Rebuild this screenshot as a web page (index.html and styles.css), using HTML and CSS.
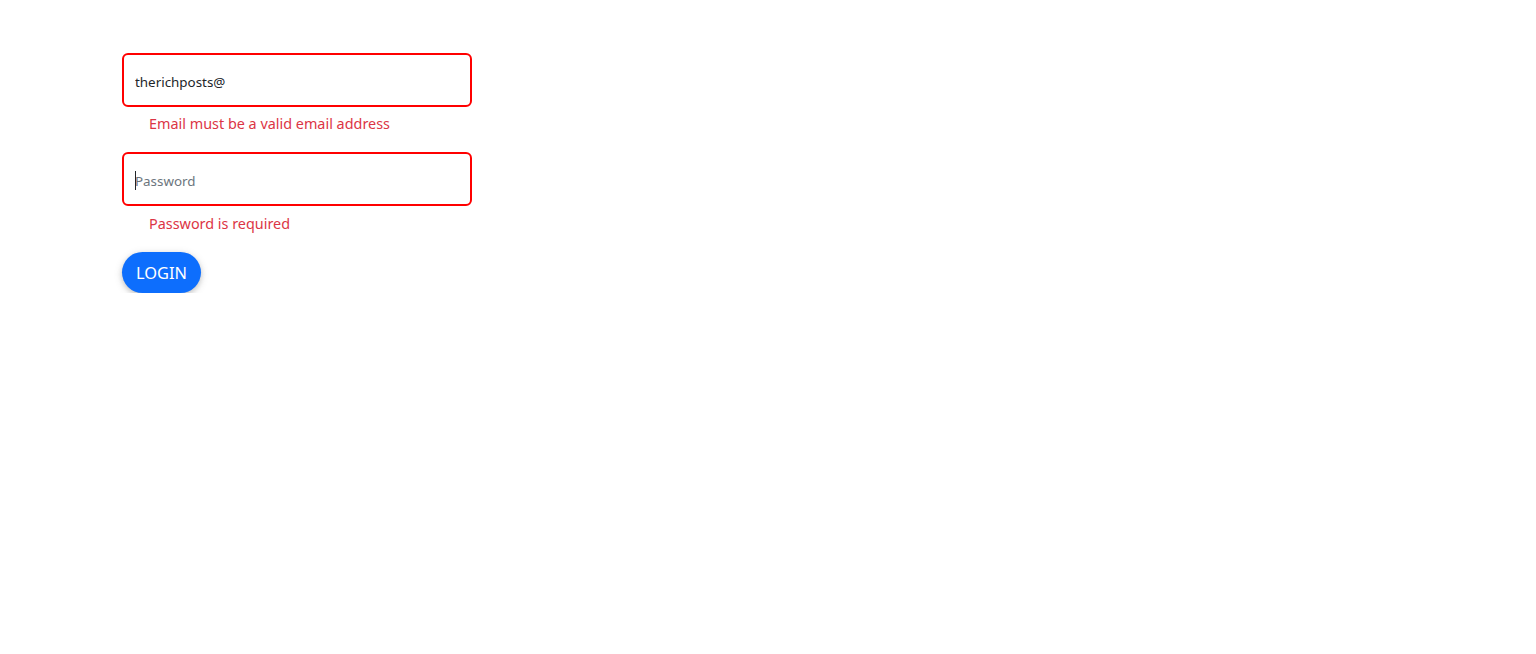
FILE: index.html
```html
<!DOCTYPE html>
<html lang="en">
<head>
<meta charset="utf-8">
<title>Login</title>
<link rel="stylesheet" href="styles.css">
</head>
<body>
  <form class="login-form" novalidate>
    <div class="field">
      <input class="field-input" type="email" value="therichposts@" aria-label="Email">
    </div>
    <div class="field-error">Email must be a valid email address</div>
    <div class="field field-focused">
      <input class="field-input" type="password" placeholder="Password" aria-label="Password">
      <span class="caret"></span>
    </div>
    <div class="field-error field-error-last">Password is required</div>
    <button class="login-btn" type="button">LOGIN</button>
  </form>
</body>
</html>
```
FILE: styles.css
```css
html, body {
  margin: 0;
  padding: 0;
  background: #fff;
}
body {
  font-family: "Noto Sans", "Open Sans", sans-serif;
  color: #212529;
}
.login-form {
  width: 350px;
  margin: 53px 0 0 122px;
  display: flex;
  flex-direction: column;
  align-items: flex-start;
}
.field {
  position: relative;
  width: 100%;
}
.field-input {
  box-sizing: border-box;
  display: block;
  width: 100%;
  height: 54px;
  padding: 3px 11px 0;
  border: 2px solid #ff0000;
  border-radius: 6px;
  font-family: "Noto Sans", "Open Sans", sans-serif;
  font-size: 13.4px;
  color: #212529;
  background: #fff;
  outline: none;
}
.field-input::placeholder {
  color: #6c757d;
  opacity: 1;
}
.caret {
  position: absolute;
  left: 13px;
  top: 19px;
  width: 1px;
  height: 19px;
  background: #212529;
}
.field-error {
  box-sizing: border-box;
  width: 100%;
  padding-left: 27px;
  margin: 5px 0 16px;
  font-size: 14.4px;
  line-height: 24px;
  color: #dc3545;
}
.field-error-last {
  margin-top: 6px;
}
.login-btn {
  margin-top: 0;
  height: 41px;
  padding: 0 14px;
  border: none;
  border-radius: 21px;
  background: #0d6efd;
  color: #fff;
  font-family: "Noto Sans", "Open Sans", sans-serif;
  font-size: 16.4px;
  box-shadow: 0 2px 5px rgba(0, 0, 0, 0.16), 0 2px 10px rgba(0, 0, 0, 0.12);
  cursor: pointer;
}
```
